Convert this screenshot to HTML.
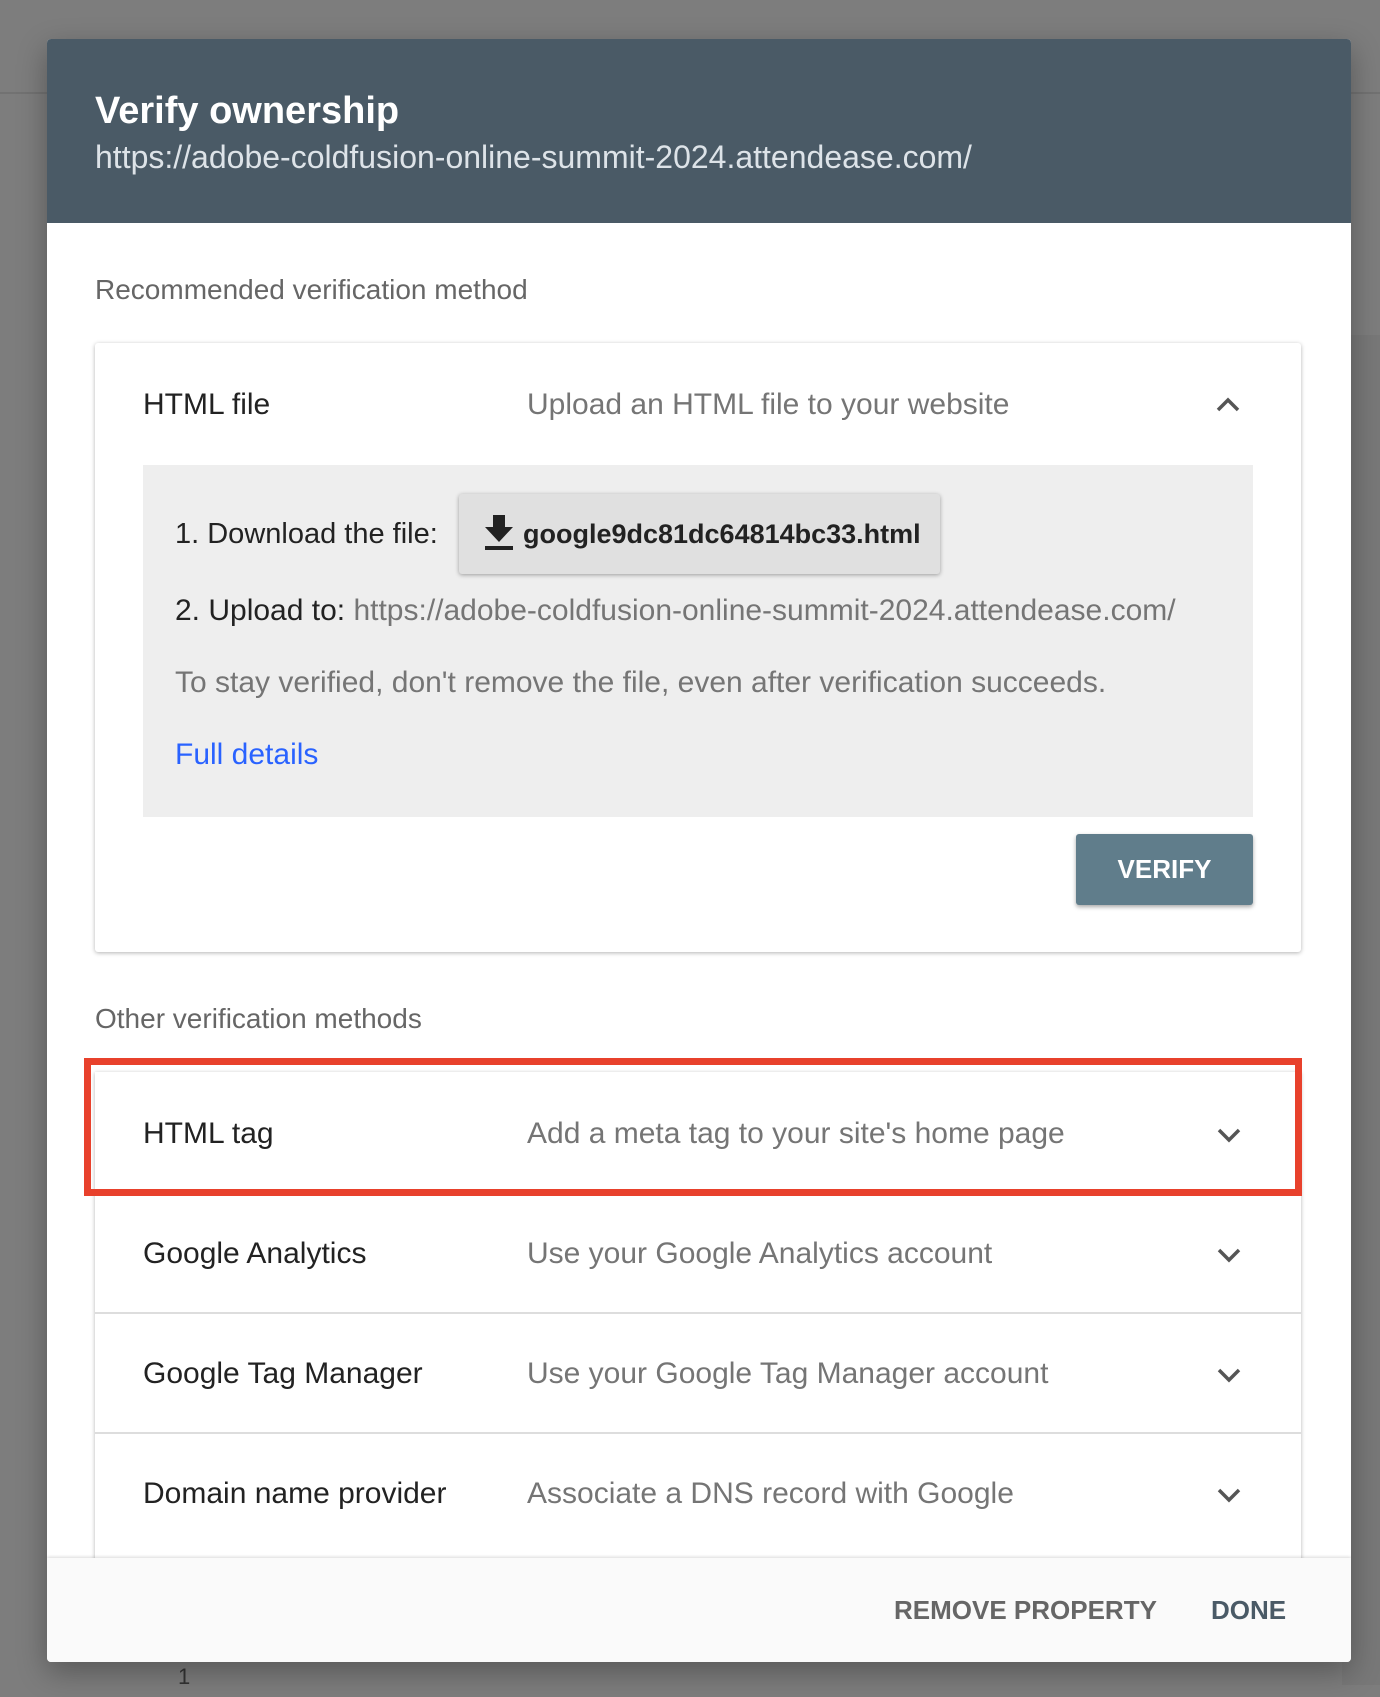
<!DOCTYPE html>
<html><head><meta charset="utf-8"><style>
*{margin:0;padding:0;box-sizing:border-box}
body{width:1380px;height:1686px;background:#7d7d7d;font-family:"Liberation Sans",Arial,sans-serif;position:relative;overflow:hidden}
.a{position:absolute;white-space:nowrap}
.t{line-height:40px;height:40px}
</style></head><body>
<div class="a" style="left:0;top:92px;width:1380px;height:2px;background:#727272"></div>
<div class="a" style="left:1342px;top:335px;width:38px;height:1350px;background:#787878"></div>
<div class="a t" style="left:178px;top:1657px;font-size:22px;color:#333">1</div>

<div class="a" style="left:47px;top:39px;width:1304px;height:1623px;background:#fff;border-radius:4px;overflow:hidden;box-shadow:0 10px 30px rgba(0,0,0,.3)">
  <div class="a" style="left:0;top:0;width:1304px;height:184px;background:#4a5a66"></div>
  <div class="a t" style="left:48px;top:47px;font-size:38px;font-weight:bold;color:#fff;height:50px;line-height:50px">Verify ownership</div>
  <div class="a t" style="left:48px;top:98px;font-size:32px;color:#dde3e8">https://adobe-coldfusion-online-summit-2024.attendease.com/</div>

  <div class="a t" style="left:48px;top:231px;font-size:28px;color:#666">Recommended verification method</div>

  <div class="a" style="left:48px;top:304px;width:1206px;height:609px;background:#fff;box-shadow:0 1px 4px rgba(0,0,0,.3);border-radius:3px">
    <div class="a t" style="left:48px;top:42px;font-size:30px;color:#222">HTML file</div>
    <div class="a t" style="left:432px;top:42px;font-size:30px;color:#757575">Upload an HTML file to your website</div>
    <svg class="a" style="left:1120px;top:50px" width="26" height="22" viewBox="0 0 26 22"><path d="M3 17 L13 7 L23 17" fill="none" stroke="#555" stroke-width="3.5"/></svg>
    <div class="a" style="left:48px;top:122px;width:1110px;height:352px;background:#eeeeee">
      <div class="a t" style="left:32px;top:49px;font-size:29px;color:#222">1. Download the file:</div>
      <div class="a" style="left:316px;top:29px;width:481px;height:80px;background:#e0e0e0;border-radius:3px;box-shadow:0 1px 4px rgba(0,0,0,.35)">
        <svg class="a" style="left:25px;top:21px" width="30" height="36" viewBox="0 0 30 36"><path d="M9 0 H21 V12 H29 L15 27 L1 12 H9 Z" fill="#222"/><rect x="1" y="31" width="28" height="4" fill="#222"/></svg>
        <div class="a t" style="left:64px;top:20px;font-size:27px;font-weight:bold;color:#222">google9dc81dc64814bc33.html</div>
      </div>
      <div class="a t" style="left:32px;top:126px;font-size:30px;color:#222">2. Upload to: <span style="color:#757575">https://adobe-coldfusion-online-summit-2024.attendease.com/</span></div>
      <div class="a t" style="left:32px;top:198px;font-size:30px;color:#757575">To stay verified, don't remove the file, even after verification succeeds.</div>
      <div class="a t" style="left:32px;top:270px;font-size:30px;color:#2962ff">Full details</div>
    </div>
    <div class="a" style="left:981px;top:491px;width:177px;height:71px;background:#607d8b;border-radius:3px;box-shadow:0 2px 4px rgba(0,0,0,.35);color:#fff;font-size:26px;font-weight:bold;text-align:center;line-height:71px">VERIFY</div>
  </div>

  <div class="a t" style="left:48px;top:960px;font-size:28px;color:#666">Other verification methods</div>

  <div class="a" style="left:48px;top:1033px;width:1206px;height:560px;background:#fff;box-shadow:0 1px 4px rgba(0,0,0,.3)"></div>
  <div class="a" style="left:48px;top:1273px;width:1206px;height:2px;background:#ddd"></div>
  <div class="a" style="left:48px;top:1393px;width:1206px;height:2px;background:#ddd"></div>

  <div class="a t" style="left:96px;top:1075px;font-size:30px;color:#222">HTML tag</div>
  <div class="a t" style="left:480px;top:1075px;font-size:30px;color:#757575">Add a meta tag to your site's home page</div>
  <div class="a t" style="left:96px;top:1195px;font-size:30px;color:#222">Google Analytics</div>
  <div class="a t" style="left:480px;top:1195px;font-size:30px;color:#757575">Use your Google Analytics account</div>
  <div class="a t" style="left:96px;top:1315px;font-size:30px;color:#222">Google Tag Manager</div>
  <div class="a t" style="left:480px;top:1315px;font-size:30px;color:#757575">Use your Google Tag Manager account</div>
  <div class="a t" style="left:96px;top:1435px;font-size:30px;color:#222">Domain name provider</div>
  <div class="a t" style="left:480px;top:1435px;font-size:30px;color:#757575">Associate a DNS record with Google</div>
  <svg class="a" style="left:1169px;top:1085px" width="26" height="22" viewBox="0 0 26 22"><path d="M3 6 L13 16 L23 6" fill="none" stroke="#555" stroke-width="3.5"/></svg>
  <svg class="a" style="left:1169px;top:1205px" width="26" height="22" viewBox="0 0 26 22"><path d="M3 6 L13 16 L23 6" fill="none" stroke="#555" stroke-width="3.5"/></svg>
  <svg class="a" style="left:1169px;top:1325px" width="26" height="22" viewBox="0 0 26 22"><path d="M3 6 L13 16 L23 6" fill="none" stroke="#555" stroke-width="3.5"/></svg>
  <svg class="a" style="left:1169px;top:1445px" width="26" height="22" viewBox="0 0 26 22"><path d="M3 6 L13 16 L23 6" fill="none" stroke="#555" stroke-width="3.5"/></svg>

  <div class="a" style="left:0;top:1519px;width:1304px;height:104px;background:#fafafa;box-shadow:0 -1px 3px rgba(0,0,0,.15)"></div>
  <div class="a t" style="left:847px;top:1551px;font-size:26px;font-weight:bold;color:#666">REMOVE PROPERTY</div>
  <div class="a t" style="left:1164px;top:1551px;font-size:26px;font-weight:bold;color:#4a5a66">DONE</div>
</div>
<div class="a" style="left:84px;top:1058px;width:1218px;height:138px;border:7px solid #e8412c"></div>
</body></html>
